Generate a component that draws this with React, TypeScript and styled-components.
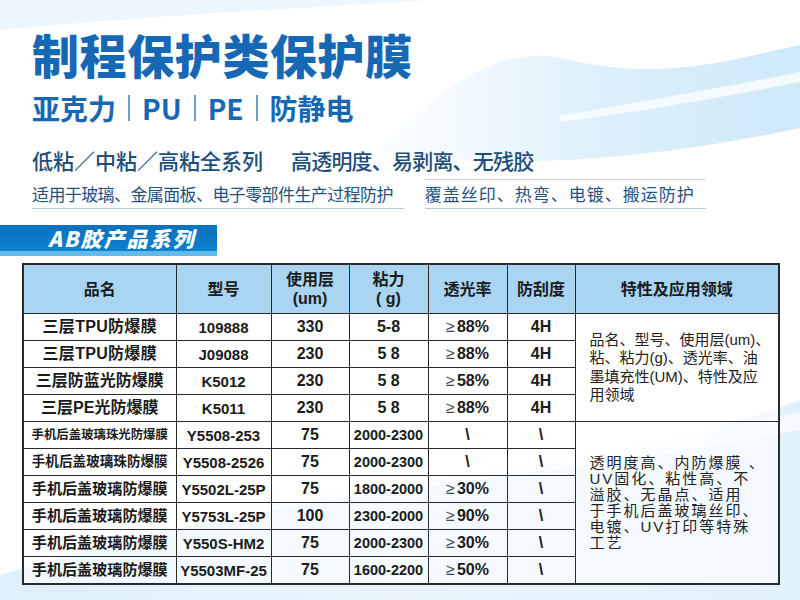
import React from 'react';
import styled, { createGlobalStyle } from 'styled-components';

const GlobalStyle = createGlobalStyle`
  html,
  body {
    margin: 0;
    padding: 0;
    background: #fff;
  }

  body {
    font-family: "Noto Sans CJK SC", "Noto Sans", sans-serif;
  }
`;

const Page = styled.div`
  position: relative;
  width: 800px;
  height: 600px;
  overflow: hidden;
  background: #fff;
`;

const Backdrop = styled.svg`
  position: absolute;
  top: 0;
  left: 0;
  width: 800px;
  height: 600px;
  z-index: 0;
`;

const Content = styled.div`
  position: relative;
  z-index: 1;
  display: flex;
  flex-direction: column;
  padding-top: 26px;
`;

const Intro = styled.header`
  display: flex;
  flex-direction: column;
  padding-left: 32px;
`;

const Title = styled.h1`
  margin: 0;
  font-size: 47px;
  line-height: 56px;
  font-weight: 900;
  letter-spacing: 0.6px;
  color: #1768b4;
`;

const Subtitle = styled.div`
  display: flex;
  align-items: center;
  height: 36px;
  margin-top: 8px;
  font-size: 28px;
  font-weight: 700;
  color: #1768b4;
`;

const Bar = styled.span`
  display: inline-block;
  width: 2px;
  height: 26px;
  margin: 0 12px;
  background: #6a9ccd;
`;

const Features = styled.div`
  display: flex;
  gap: 28px;
  margin-top: 20px;
  font-size: 21px;
  line-height: 28px;
  font-weight: 500;
  color: #1d4e7c;
`;

const Feature = styled.span<{ $spacing?: number }>`
  letter-spacing: ${(props) => props.$spacing ?? 0}px;
`;

const Uses = styled.div`
  display: flex;
  gap: 21px;
  margin-top: 5px;
  font-size: 17px;
  line-height: 24px;
  color: #23527f;
`;

const UseItem = styled.span<{ $spacing: number; $topLine?: boolean }>`
  padding: 2px 11px 2px 0;
  border-top: 1.5px solid ${(props) => (props.$topLine ? '#c3d3e0' : 'transparent')};
  border-bottom: 1.5px solid #b7c9d8;
  letter-spacing: ${(props) => props.$spacing}px;
`;

const Banner = styled.div`
  display: flex;
  align-items: center;
  box-sizing: border-box;
  width: 217px;
  height: 31px;
  margin-top: 16px;
  padding-left: 48px;
  background: linear-gradient(#0a72bf, #0d80cc);
  border-bottom: 5px solid #62b9ec;
  color: #fff;
  font-size: 21px;
  font-weight: 900;
  font-style: italic;
  letter-spacing: 2px;
`;

const Table = styled.table`
  width: 756px;
  margin: 7px 0 0 22px;
  border-collapse: collapse;
  table-layout: fixed;
  border: 2px solid #2a2a2a;
  font-family: "Liberation Sans", "Noto Sans CJK SC", sans-serif;
  font-weight: 700;
  color: #1b1b1b;
`;

const Col = styled.col<{ $w: number }>`
  width: ${(props) => props.$w}px;
`;

const HeadCell = styled.th`
  height: 48px;
  padding: 0;
  border: 1.5px solid #2a2a2a;
  background: #a9d5f2;
  font-size: 16px;
  line-height: 19px;
  font-weight: 700;
  text-align: center;
`;

const Cell = styled.td<{ $size?: number; $spacing?: number }>`
  height: 26px;
  padding: 0;
  border: 1.5px solid #2a2a2a;
  background: rgba(255, 255, 255, 0.55);
  font-size: ${(props) => props.$size ?? 15}px;
  letter-spacing: ${(props) => props.$spacing ?? 0}px;
  line-height: 1;
  text-align: center;
  white-space: nowrap;
`;

const NoteCell = styled.td<{ $tight?: boolean }>`
  padding: 0 0 0 14px;
  border: 1.5px solid #2a2a2a;
  background: rgba(255, 255, 255, 0.6);
  font-size: 15px;
  font-weight: 400;
  line-height: ${(props) => (props.$tight ? 16 : 18.3)}px;
  letter-spacing: ${(props) => (props.$tight ? 2 : 0)}px;
  color: #222;
  text-align: left;
  vertical-align: middle;
`;

const Ge = styled.span`
  margin-right: 2px;
  font-weight: 400;
  color: #444;
`;

interface Product {
  name: string;
  nameSize: number;
  nameSpacing?: number;
  model: string;
  layer: string;
  tack: string;
  tackSize: number;
  transmit: string;
  hardness: string;
}

const topProducts: Product[] = [
  { name: '三层TPU防爆膜', nameSize: 16, nameSpacing: 0.3, model: '109888', layer: '330', tack: '5-8', tackSize: 16, transmit: '88%', hardness: '4H' },
  { name: '三层TPU防爆膜', nameSize: 16, nameSpacing: 0.3, model: 'J09088', layer: '230', tack: '5 8', tackSize: 16, transmit: '88%', hardness: '4H' },
  { name: '三层防蓝光防爆膜', nameSize: 16, model: 'K5012', layer: '230', tack: '5 8', tackSize: 16, transmit: '58%', hardness: '4H' },
  { name: '三层PE光防爆膜', nameSize: 16, model: 'K5011', layer: '230', tack: '5 8', tackSize: 16, transmit: '88%', hardness: '4H' },
];

const phoneProducts: Product[] = [
  { name: '手机后盖玻璃珠光防爆膜', nameSize: 12.4, model: 'Y5508-253', layer: '75', tack: '2000-2300', tackSize: 14.5, transmit: '\\', hardness: '\\' },
  { name: '手机后盖玻璃珠防爆膜', nameSize: 13.6, model: 'Y5508-2526', layer: '75', tack: '2000-2300', tackSize: 14.5, transmit: '\\', hardness: '\\' },
  { name: '手机后盖玻璃防爆膜', nameSize: 15.1, model: 'Y5502L-25P', layer: '75', tack: '1800-2000', tackSize: 14.5, transmit: '30%', hardness: '\\' },
  { name: '手机后盖玻璃防爆膜', nameSize: 15.1, model: 'Y5753L-25P', layer: '100', tack: '2300-2000', tackSize: 14.5, transmit: '90%', hardness: '\\' },
  { name: '手机后盖玻璃防爆膜', nameSize: 15.1, model: 'Y550S-HM2', layer: '75', tack: '2000-2300', tackSize: 14.5, transmit: '30%', hardness: '\\' },
  { name: '手机后盖玻璃防爆膜', nameSize: 15.1, model: 'Y5503MF-25', layer: '75', tack: '1600-2200', tackSize: 14.5, transmit: '50%', hardness: '\\' },
];

const topNote = ['品名、型号、使用层(um)、', '粘、粘力(g)、透光率、油', '墨填充性(UM)、特性及应', '用领域'];
const phoneNote = ['透明度高、内防爆膜 、', 'UV固化、粘性高、不', '溢胶、无晶点、适用', '于手机后盖玻璃丝印、', '电镀、UV打印等特殊', '工艺'];

const renderNote = (lines: string[]) =>
  lines.map((line, i) => (
    <React.Fragment key={i}>
      {line}
      {i < lines.length - 1 && <br />}
    </React.Fragment>
  ));

const ProductRow: React.FC<{ product: Product; note?: React.ReactNode }> = function (props) {
  const { product, note } = props;
  const hasValue = product.transmit !== '\\';

  return (
    <tr>
      <Cell $size={product.nameSize} $spacing={product.nameSpacing}>
        {product.name}
      </Cell>
      <Cell>{product.model}</Cell>
      <Cell $size={16}>{product.layer}</Cell>
      <Cell $size={product.tackSize}>{product.tack}</Cell>
      <Cell $size={16}>
        {hasValue && <Ge>≥</Ge>}
        {product.transmit}
      </Cell>
      <Cell $size={16}>{product.hardness}</Cell>
      {note}
    </tr>
  );
};

const App: React.FC = function () {
  return (
    <Page>
      <GlobalStyle />
      <Backdrop viewBox="0 0 800 600">
        <defs>
          <linearGradient id="waveTop" x1="0" y1="0" x2="1" y2="0">
            <stop offset="0" stopColor="#eaf5fd" stopOpacity="0.2" />
            <stop offset="0.5" stopColor="#ddf0fb" />
            <stop offset="1" stopColor="#cfe9f9" />
          </linearGradient>
          <linearGradient id="waveLow" x1="0" y1="0" x2="1" y2="0">
            <stop offset="0" stopColor="#d6ecfa" />
            <stop offset="0.5" stopColor="#e4f2fc" />
            <stop offset="1" stopColor="#d9edfb" />
          </linearGradient>
        </defs>
        <path d="M0,0 L430,0 C300,8 150,16 0,30 Z" fill="#edf6fd" />
        <path d="M380,150 C500,172 650,160 800,128 L800,45 C720,62 660,82 560,58 C490,44 430,100 380,150 Z" fill="url(#waveTop)" />
        <path d="M560,116 C650,100 720,88 800,72 L800,82 C720,98 650,110 560,122 Z" fill="#fff" opacity="0.75" />
        <path d="M0,600 L0,575 C120,540 260,500 420,480 C560,462 700,440 800,400 L800,600 Z" fill="url(#waveLow)" opacity="0.8" />
        <path d="M120,540 C260,500 400,470 560,450 C660,438 740,425 800,412 L800,430 C700,450 560,470 400,490 C280,506 200,525 120,540 Z" fill="#fff" opacity="0.6" />
      </Backdrop>
      <Content>
        <Intro>
          <Title>制程保护类保护膜</Title>
          <Subtitle>
            亚克力<Bar />PU<Bar />PE<Bar />防静电
          </Subtitle>
          <Features>
            <Feature>低粘／中粘／高粘全系列</Feature>
            <Feature $spacing={-0.8}>高透明度、易剥离、无残胶</Feature>
          </Features>
          <Uses>
            <UseItem $spacing={-0.6}>适用于玻璃、金属面板、电子零部件生产过程防护</UseItem>
            <UseItem $spacing={1} $topLine>
              覆盖丝印、热弯、电镀、搬运防护
            </UseItem>
          </Uses>
        </Intro>
        <Banner>AB胶产品系列</Banner>
        <Table>
          <colgroup>
            <Col $w={153} />
            <Col $w={95} />
            <Col $w={78} />
            <Col $w={79} />
            <Col $w={79} />
            <Col $w={68} />
            <Col $w={204} />
          </colgroup>
          <thead>
            <tr>
              <HeadCell>品名</HeadCell>
              <HeadCell>型号</HeadCell>
              <HeadCell>
                使用层
                <br />
                (um)
              </HeadCell>
              <HeadCell>
                粘力
                <br />( g)
              </HeadCell>
              <HeadCell>透光率</HeadCell>
              <HeadCell>防刮度</HeadCell>
              <HeadCell>特性及应用领域</HeadCell>
            </tr>
          </thead>
          <tbody>
            {topProducts.map((product, i) => (
              <ProductRow
                key={`top-${i}`}
                product={product}
                note={i === 0 ? <NoteCell rowSpan={4}>{renderNote(topNote)}</NoteCell> : undefined}
              />
            ))}
            {phoneProducts.map((product, i) => (
              <ProductRow
                key={`phone-${i}`}
                product={product}
                note={
                  i === 0 ? (
                    <NoteCell rowSpan={6} $tight>
                      {renderNote(phoneNote)}
                    </NoteCell>
                  ) : undefined
                }
              />
            ))}
          </tbody>
        </Table>
      </Content>
    </Page>
  );
};

export default App;
